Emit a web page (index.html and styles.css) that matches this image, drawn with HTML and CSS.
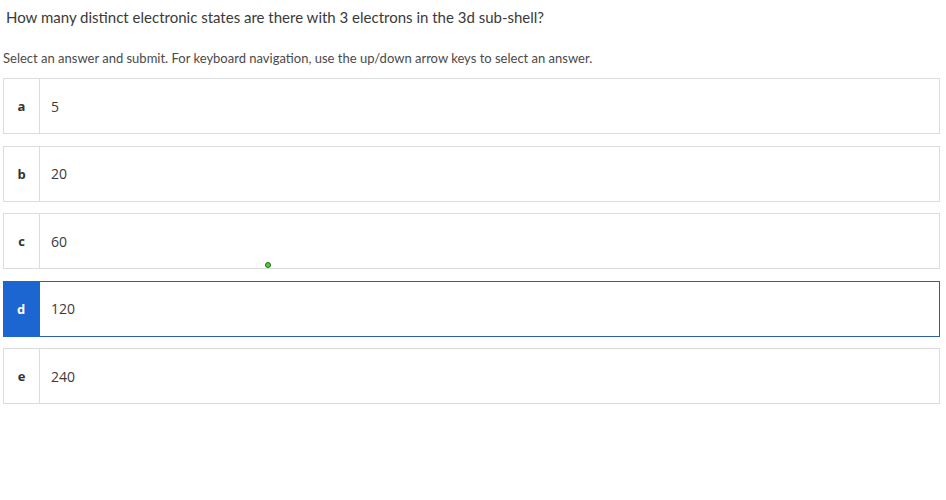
FILE: index.html
```html
<!DOCTYPE html>
<html>
<head>
<meta charset="utf-8">
<link rel="stylesheet" href="styles.css">
</head>
<body>
<div class="page">
  <h1 class="question">How many distinct electronic states are there with 3 electrons in the 3d sub-shell?</h1>
  <p class="hint">Select an answer and submit. For keyboard navigation, use the up/down arrow keys to select an answer.</p>
  <ul class="answers">
    <li class="answer"><span class="letter">a</span><span class="value">5</span></li>
    <li class="answer"><span class="letter">b</span><span class="value">20</span></li>
    <li class="answer"><span class="letter">c</span><span class="value">60</span></li>
    <li class="answer selected"><span class="letter">d</span><span class="value">120</span></li>
    <li class="answer"><span class="letter">e</span><span class="value">240</span></li>
  </ul>
  <span class="cursor-dot"></span>
</div>
</body>
</html>
```
FILE: styles.css
```css
html, body {
  margin: 0;
  padding: 0;
  background: #fff;
}
.page {
  position: relative;
  padding: 0 6px 0 3px;
  font-family: Lato, "Open Sans", sans-serif;
  color: #333;
}
.question {
  margin: 0;
  padding: 8px 0 0 3px;
  font-size: 15px;
  font-weight: 400;
  line-height: 18px;
  color: #3a3a3a;
}
.hint {
  margin: 0;
  padding-top: 24px;
  font-size: 13px;
  line-height: 16px;
  color: #4a4a4a;
}
.answers {
  list-style: none;
  margin: 0;
  padding: 12px 0 0 0;
  display: flex;
  flex-direction: column;
  gap: 11.5px;
}
.answer {
  display: flex;
  height: 56px;
  border: 1px solid #dcdcdc;
  box-sizing: border-box;
  align-items: stretch;
}
.letter {
  width: 35px;
  border-right: 1px solid #dcdcdc;
  display: flex;
  align-items: center;
  justify-content: center;
  font-family: "Open Sans", sans-serif;
  font-weight: 700;
  font-size: 13px;
  color: #333;
}
.value {
  display: flex;
  align-items: center;
  padding-left: 11px;
  font-family: "Open Sans", sans-serif;
  font-size: 14px;
  color: #3a3a3a;
}
.answer.selected {
  border-color: #2d5fa8;
}
.answer.selected .letter {
  background: #1c66d2;
  border-right-color: #1c66d2;
  color: #fff;
  margin: -1px 0 -1px -1px;
  width: 36px;
}
.cursor-dot {
  position: absolute;
  left: 265px;
  top: 262px;
  width: 4px;
  height: 4px;
  border-radius: 50%;
  background: #4cd43c;
  border: 1.5px solid #1a6b12;
}
```
